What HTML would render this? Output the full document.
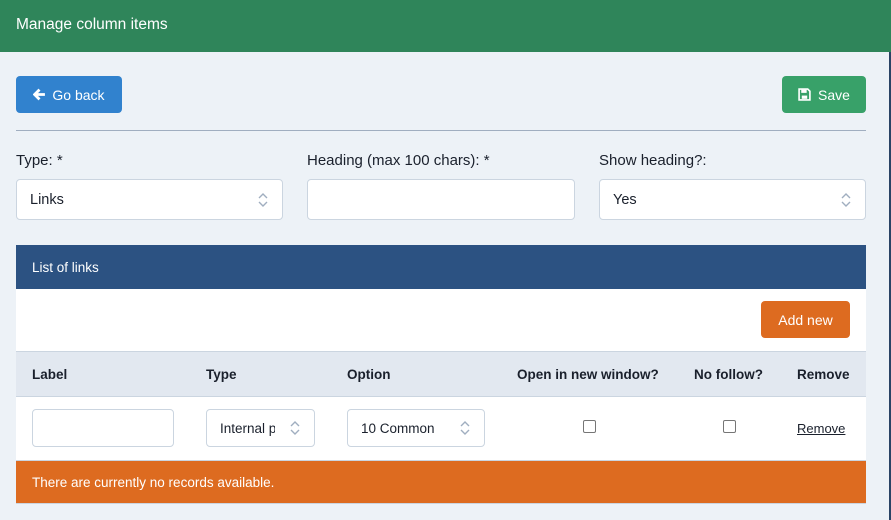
<!DOCTYPE html><html><head><style>
*{box-sizing:border-box;margin:0;padding:0}
body{width:891px;height:520px;background:#edf2f7;font-family:"Liberation Sans",sans-serif;font-size:14.5px;color:#1a202c;position:relative;overflow:hidden;border-right:2px solid #2a4365}
.a{position:absolute}
.hdr{left:0;top:0;width:891px;height:52px;background:#2f855a;color:#fff;font-size:15.5px;padding:16px 16px}
.btn{border-radius:4px;color:#fff;display:flex;align-items:center;justify-content:center;font-size:14px}
.inp{background:#fff;border:1px solid #cbd5e0;border-radius:4px;display:flex;align-items:center;padding-left:13px;font-size:14.5px}
.car{position:absolute;right:14px;top:50%;transform:translateY(-50%)}
.th{font-weight:bold;font-size:13.5px;top:367px}
.cb{width:13px;height:13px;border:1px solid #767676;border-radius:2px;background:#fff}
.lb{top:152px;font-size:15px}
</style></head><body>
<div class="a hdr">Manage column items</div>
<div class="a btn" style="left:16px;top:76px;width:106px;height:37px;background:#3182ce"><svg width="13" height="13" viewBox="0 0 12 12" style="margin-right:6px"><path d="M6 1.5 1.5 6 6 10.5M1.8 6H11" stroke="#fff" stroke-width="2.6" fill="none"/></svg>Go back</div>
<div class="a btn" style="left:782px;top:76px;width:84px;height:37px;background:#38a169"><svg width="13" height="13" viewBox="0 0 12 12" style="margin-right:7px"><path d="M1 1h8l2 2v8H1z" fill="none" stroke="#fff" stroke-width="1.5"/><rect x="3" y="1.5" width="5" height="3" fill="#fff"/><rect x="3.5" y="7" width="5" height="3" fill="#fff"/></svg>Save</div>
<div class="a" style="left:16px;top:130px;width:850px;height:1px;background:#a0aec0"></div>
<div class="a lb" style="left:16px">Type: *</div>
<div class="a lb" style="left:307px">Heading (max 100 chars): *</div>
<div class="a lb" style="left:599px">Show heading?:</div>
<div class="a inp" style="left:16px;top:179px;width:267px;height:41px">Links<svg class="car" width="10" height="16" viewBox="0 0 10 16"><path d="M1 6 5 2 9 6M1 10l4 4 4-4" stroke="#a0aec0" stroke-width="1.4" fill="none"/></svg></div>
<div class="a inp" style="left:307px;top:179px;width:268px;height:41px"></div>
<div class="a inp" style="left:599px;top:179px;width:267px;height:41px">Yes<svg class="car" width="10" height="16" viewBox="0 0 10 16"><path d="M1 6 5 2 9 6M1 10l4 4 4-4" stroke="#a0aec0" stroke-width="1.4" fill="none"/></svg></div>
<div class="a" style="left:16px;top:245px;width:850px;height:44px;background:#2c5282;color:#fff;font-size:13.5px;padding:15px 16px">List of links</div>
<div class="a" style="left:16px;top:289px;width:850px;height:62px;background:#fff"></div>
<div class="a btn" style="left:761px;top:301px;width:89px;height:37px;background:#dd6b20">Add new</div>
<div class="a" style="left:16px;top:351px;width:850px;height:46px;background:#e2e8f0;border-top:1px solid #cbd5e0;border-bottom:1px solid #cbd5e0"></div>
<div class="a th" style="left:32px">Label</div>
<div class="a th" style="left:206px">Type</div>
<div class="a th" style="left:347px">Option</div>
<div class="a th" style="left:517px">Open in new window?</div>
<div class="a th" style="left:694px">No follow?</div>
<div class="a th" style="left:797px">Remove</div>
<div class="a" style="left:16px;top:397px;width:850px;height:63px;background:#fff"></div>
<div class="a inp" style="left:32px;top:409px;width:142px;height:38px"></div>
<div class="a inp" style="left:206px;top:409px;width:109px;height:38px;font-size:13.5px;overflow:hidden"><span style="width:55px;overflow:hidden;white-space:nowrap;display:block">Internal page</span><svg class="car" width="10" height="16" viewBox="0 0 10 16"><path d="M1 6 5 2 9 6M1 10l4 4 4-4" stroke="#a0aec0" stroke-width="1.4" fill="none"/></svg></div>
<div class="a inp" style="left:347px;top:409px;width:138px;height:38px;font-size:13.5px"><span style="width:76px;overflow:hidden;white-space:nowrap;display:block">10 Common Areas</span><svg class="car" width="10" height="16" viewBox="0 0 10 16"><path d="M1 6 5 2 9 6M1 10l4 4 4-4" stroke="#a0aec0" stroke-width="1.4" fill="none"/></svg></div>
<div class="a cb" style="left:583px;top:420px"></div>
<div class="a cb" style="left:723px;top:420px"></div>
<div class="a" style="left:797px;top:421px;font-size:13px;text-decoration:underline">Remove</div>
<div class="a" style="left:16px;top:460px;width:850px;height:44px;background:#dd6b20;color:#fff;font-size:13.5px;padding:14px 16px;border-top:1px solid #cbd5e0;border-bottom:1px solid #cbd5e0">There are currently no records available.</div>
</body></html>
